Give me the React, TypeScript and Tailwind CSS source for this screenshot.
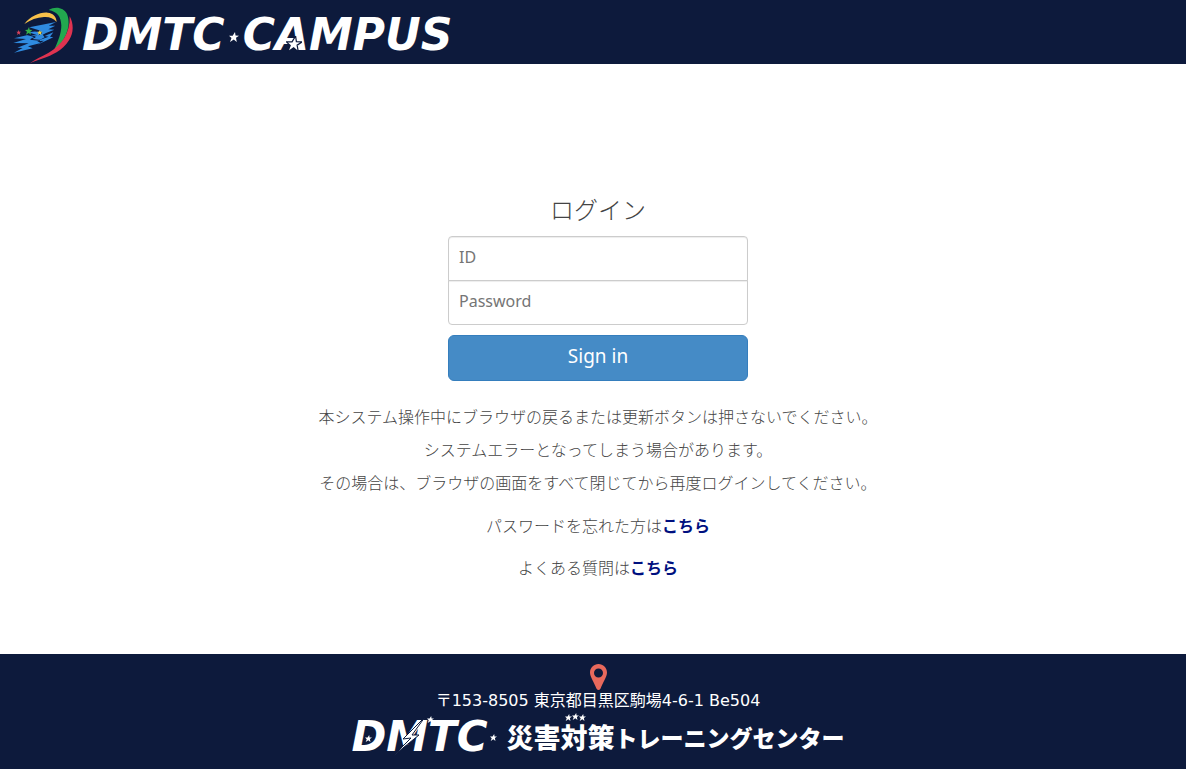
import React, { useState } from 'react';

interface StarProps {
  className?: string;
}

const Star: React.FC<StarProps> = ({ className }) => (
  <svg viewBox="0 0 20 20" fill="currentColor" aria-hidden="true" className={className}>
    <path d="M12 0l1 7 7 .4-6 4 1.500 8.600-6-5L2 20l3-8L0 7.400h7.400z" />
  </svg>
);

const CampusMark: React.FC = () => (
  <svg viewBox="36 18 186 174" aria-hidden="true" className="w-[62px] h-[58px] shrink-0">
    <path
      fill="#2f8be0"
      d="M88 82L168 66L146 77L166 77L145 88L163 89L138 99L128 104L134 112L112 124L122 129L84 139L98 145L42 158L68 144L52 143L86 130L40 129L78 117L42 115L80 106L112 106L86 97L122 92Z"
    />
    <path fill="#2f8be0" d="M160 97L134 108L146 110L108 124L132 122L112 134L160 112L150 110Z" />
    <path fill="none" stroke="#0d1a3c" strokeWidth="3" d="M84 104L106 111L92 118L120 121M98 90L126 98L116 104" />
    <path fill="#f7c04a" d="M73 72C92 48 120 36 143 38C160 40 169 50 170 66C160 54 148 50 132 51C110 52 92 60 73 72Z" />
    <path fill="#22a84f" d="M146 30C166 18 191 22 201 42C215 76 198 122 162 151C174 124 184 101 184 76C183 50 172 35 146 30Z" />
    <path fill="#de3350" d="M209 49C221 70 222 98 207 121C187 153 153 167 132 174C113 180 102 184 88 191C104 177 126 170 146 158C184 137 211 100 209 49Z" />
    <path fill="#d8415b" d="M56 90l2 5 5 0-4 4 2 6-5-4-5 4 2-6-4-4 5 0z" />
    <path fill="#35b14c" d="M87 81l2 8 8 1-6 5 2 9-7-5-8 5 3-9-6-5 8-1z" />
    <path fill="#f0cf3d" d="M120 90l1 5 6 0-4 4 1 6-5-4-5 4 2-6-5-4 6 0z" />
  </svg>
);

const CampusLogo: React.FC = () => (
  <a href="#" aria-label="DMTC CAMPUS" className="flex items-center text-white">
    <CampusMark />
    <span className="ml-2 flex items-center font-['DejaVu_Sans',sans-serif] text-[44px] leading-[58px] font-bold italic">
      DMTC
      <Star className="mx-1 mt-1 h-2.5 w-2.5" />
      <span className="relative">
        CAMPUS
        {/* star set into the crossbar of the A */}
        <svg
          viewBox="-3 -3 26 26"
          aria-hidden="true"
          className="absolute left-[43px] top-[30px] h-4 w-4"
        >
          <path
            fill="#fff"
            stroke="#0d1a3c"
            strokeWidth="4"
            paintOrder="stroke"
            d="M12 0l1 7 7 .4-6 4 1.500 8.600-6-5L2 20l3-8L0 7.400h7.400z"
          />
        </svg>
      </span>
    </span>
  </a>
);

const PinIcon: React.FC = () => (
  <svg viewBox="0 0 17 26" aria-hidden="true" className="h-[26px] w-[17px]">
    <path
      fill="#e8695c"
      fillRule="evenodd"
      d="M8.500 0C3.800 0 0 3.800 0 8.500C0 13 4 18 6.400 24.500Q8.500 27.500 10.600 24.500C13 18 17 13 17 8.500C17 3.800 13.200 0 8.500 0ZM8.500 4.500A4.500 4.500 0 1 1 8.500 13.500A4.500 4.500 0 1 1 8.500 4.500Z"
    />
  </svg>
);

const CenterLogo: React.FC = () => (
  <div className="flex items-center whitespace-nowrap text-white">
    <span className="relative font-['DejaVu_Sans',sans-serif] text-[42px] leading-10 font-bold italic">
      DMTC
      <Star className="absolute left-3.5 top-[18px] h-[7px] w-[7px]" />
      <Star className="absolute left-[76px] -top-px h-[7px] w-[7px]" />
      <svg viewBox="0 0 36 40" aria-hidden="true" className="absolute left-[39px] top-0 h-10 w-9">
        <path
          fill="#fff"
          stroke="#0d1a3c"
          strokeWidth="1"
          d="M35 0L13 22L21 21L3 39L29 18L22 18Z"
        />
      </svg>
    </span>
    <Star className="ml-0.5 h-[7px] w-[7px]" />
    <span className="relative ml-2.5 font-['Noto_Sans_CJK_JP',sans-serif] text-[27px] leading-10 font-black">
      災害対策
      <span className="absolute left-[58px] -top-1 flex">
        <Star className="mt-px h-[7px] w-[7px]" />
        <Star className="h-[7px] w-[7px]" />
        <Star className="mt-px h-[7px] w-[7px]" />
      </span>
    </span>
    <span className="font-['Noto_Sans_CJK_JP',sans-serif] text-[23px] leading-10 font-black">
      トレーニングセンター
    </span>
  </div>
);

const notices = [
  '本システム操作中にブラウザの戻るまたは更新ボタンは押さないでください。',
  'システムエラーとなってしまう場合があります。',
  'その場合は、ブラウザの画面をすべて閉じてから再度ログインしてください。',
];

const helpLinks = [
  { label: 'パスワードを忘れた方は', href: '#password' },
  { label: 'よくある質問は', href: '#faq' },
];

const LoginForm: React.FC = () => {
  const [id, setId] = useState('');
  const [password, setPassword] = useState('');

  return (
    <form onSubmit={(e) => e.preventDefault()} className="flex w-full max-w-[300px] flex-col">
      <h1 className="mb-2.5 text-center text-2xl leading-8 font-light">ログイン</h1>
      <input
        type="text"
        aria-label="ID"
        placeholder="ID"
        value={id}
        onChange={(e) => setId(e.target.value)}
        className="h-[45px] rounded-t border border-[#ccc] px-2.5 pb-1 text-base shadow-[inset_0_1px_1px_rgba(0,0,0,0.075)] placeholder:text-[#757575] focus:outline-none focus:border-[#66afe9]"
      />
      <input
        type="password"
        aria-label="Password"
        placeholder="Password"
        value={password}
        onChange={(e) => setPassword(e.target.value)}
        className="-mt-px h-[45px] rounded-b border border-[#ccc] px-2.5 pb-1 text-base shadow-[inset_0_1px_1px_rgba(0,0,0,0.075)] placeholder:text-[#757575] focus:outline-none focus:border-[#66afe9]"
      />
      <button
        type="submit"
        className="mt-2.5 h-[46px] rounded-md border border-[#357ebd] bg-[#458bc6] pb-1 text-[19px] text-white hover:bg-[#3276b1]"
      >
        Sign in
      </button>
    </form>
  );
};

export default function App() {
  return (
    <div className="flex min-h-screen flex-col bg-white font-['Noto_Sans','Noto_Sans_CJK_JP',sans-serif] text-base text-[#444]">
      <header className="flex h-16 items-center bg-[#0d1a3c] pl-3 pt-1.5">
        <CampusLogo />
      </header>

      <main className="flex flex-1 flex-col items-center pt-[130px] pb-16 pl-2.5">
        <LoginForm />

        <div className="mt-5 text-center leading-[33px] font-light">
          {notices.map((notice) => (
            <p key={notice}>{notice}</p>
          ))}
        </div>

        {helpLinks.map(({ label, href }) => (
          <p key={href} className="mt-2.5 leading-8 font-light">
            {label}
            <a href={href} className="font-bold text-[#00107f] hover:underline">
              こちら
            </a>
          </p>
        ))}
      </main>

      <footer className="flex flex-col items-center bg-[#0d1a3c] pt-2.5 pb-3 pl-2.5 text-white">
        <PinIcon />
        <address className="font-['DejaVu_Sans','Noto_Sans_CJK_JP',sans-serif] leading-[21px] not-italic">
          〒153-8505 東京都目黒区駒場4-6-1 Be504
        </address>
        <div className="mt-1.5">
          <CenterLogo />
        </div>
      </footer>
    </div>
  );
}
